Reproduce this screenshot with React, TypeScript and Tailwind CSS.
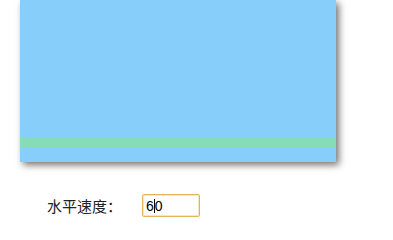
import React from "react";

export default function App() {
  return (
    <div className="w-[393px] h-[221px] bg-white overflow-hidden relative">
      <div className="ml-[20px] w-[316px] h-[162px] bg-[#87cefa] shadow-[3px_3px_7px_rgba(0,0,0,0.55)] flex flex-col">
        <div className="h-[137px]" />
        <div className="h-[10px] bg-[#86dbbb]" />
      </div>
      <div className="mt-[32px] flex items-center">
        <span
          className="ml-[47px] w-[95px] text-[15px] leading-[23px] text-[#222]"
          style={{ fontFamily: '"Noto Sans CJK SC", "Noto Sans", sans-serif' }}
        >
          水平速度：
        </span>
        <div className="w-[58px] h-[23px] border border-[#e2b45c] rounded-[2px] bg-white flex items-center pl-[3px] shadow-[inset_0_0_0_1px_#f7e6c4]">
          <span
            className="text-[14px] leading-none text-black flex items-center"
            style={{ fontFamily: '"Liberation Sans", Arial, sans-serif' }}
          >
            6<span className="inline-block w-px h-[14px] bg-black" />0
          </span>
        </div>
      </div>
    </div>
  );
}
